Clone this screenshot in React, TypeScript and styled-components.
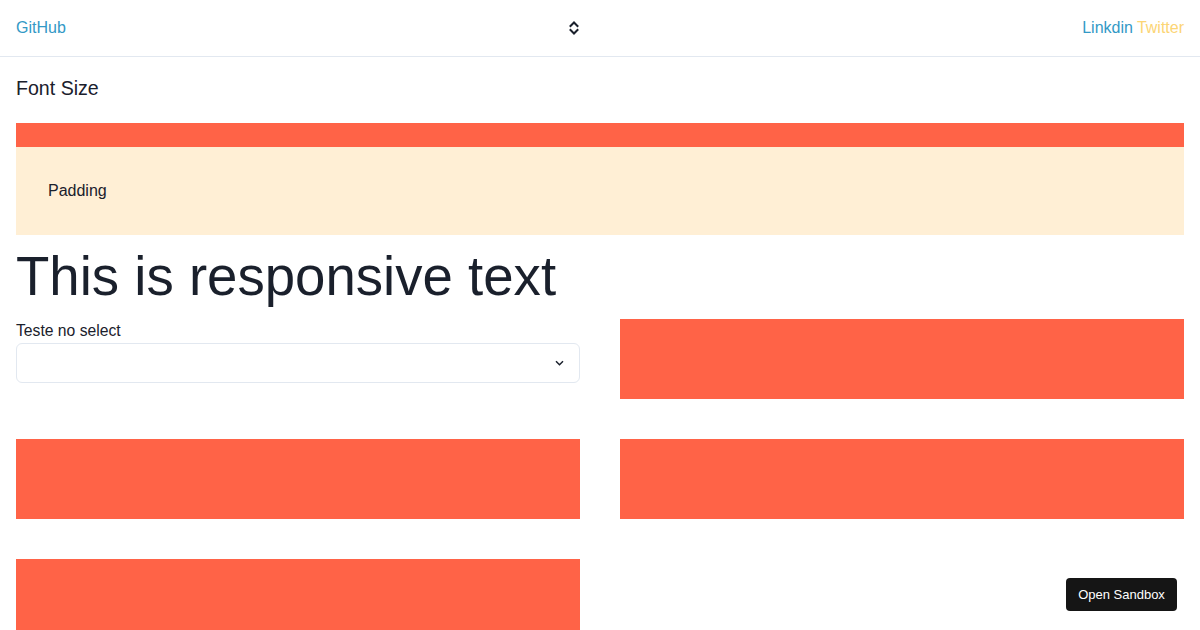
import React from "react";
import styled, { createGlobalStyle } from "styled-components";

const Global = createGlobalStyle`
  * { box-sizing: border-box; }
  html, body { margin: 0; padding: 0; background: #fff; }
  body {
    font-family: "Liberation Sans", Arial, sans-serif;
    color: #1a202c;
    font-size: 16px;
    line-height: 1.5;
  }
`;

const Header = styled.header`
  height: 57px;
  border-bottom: 1px solid #e2e8f0;
  display: flex;
  justify-content: space-between;
  align-items: center;
  padding: 0 16px;
`;

const NavLink = styled.a<{ $tone: string }>`
  color: ${(p) => p.$tone};
  text-decoration: none;
  font-size: 16px;
`;

const Right = styled.nav`
  display: flex;
  justify-content: flex-end;
  gap: 4px;
`;

const Toggle = styled.button`
  border: 0;
  background: none;
  padding: 0;
  width: 16px;
  height: 16px;
  display: flex;
  align-items: center;
  justify-content: center;
  color: #1a202c;
`;

const Main = styled.main`
  padding: 16px 16px 0;
`;

const Title = styled.h2`
  margin: 0 0 20px;
  font-size: 19.6px;
  font-weight: 400;
  line-height: 30px;
`;

const Bar = styled.div`
  height: 24px;
  background: #ff6347;
`;

const PaddingBox = styled.div`
  background: #ffefd5;
  padding: 32px;
  line-height: 24px;
`;

const Big = styled.p`
  margin: 0;
  font-size: 54.6px;
  line-height: 84px;
`;

const Grid = styled.div`
  display: grid;
  grid-template-columns: 1fr 1fr;
  column-gap: 40px;
  row-gap: 40px;
  grid-auto-rows: 80px;
`;

const Tile = styled.div`
  background: #ff6347;
`;

const Field = styled.div`
  display: flex;
  flex-direction: column;
`;

const Label = styled.label`
  font-size: 15.7px;
  line-height: 24px;
`;

const SelectBox = styled.div`
  height: 40px;
  border: 1px solid #e2e8f0;
  border-radius: 6px;
  display: flex;
  align-items: center;
  justify-content: flex-end;
  padding-right: 15px;
  color: #1a202c;
`;

const SandboxButton = styled.a`
  position: fixed;
  right: 23px;
  bottom: 19px;
  width: 111px;
  height: 33px;
  background: #151515;
  color: #fff;
  border-radius: 4px;
  font-size: 13px;
  display: flex;
  align-items: center;
  justify-content: center;
  text-decoration: none;
`;

export default function App() {
  return (
    <>
      <Global />
      <Header>
        <NavLink $tone="#3399c6" href="#">GitHub</NavLink>
        <Toggle aria-label="toggle">
          <svg width="12" height="16" viewBox="0 0 12 16" fill="none" stroke="currentColor" strokeWidth="2" strokeLinecap="square" strokeLinejoin="miter">
            <polyline points="2.5,6 6,2.5 9.5,6" />
            <polyline points="2.5,10 6,13.5 9.5,10" />
          </svg>
        </Toggle>
        <Right>
          <NavLink $tone="#3399c6" href="#">Linkdin</NavLink>
          <NavLink $tone="#fcd575" href="#">Twitter</NavLink>
        </Right>
      </Header>
      <Main>
        <Title>Font Size</Title>
        <Bar />
        <PaddingBox>Padding</PaddingBox>
        <Big>This is responsive text</Big>
        <Grid>
          <Field>
            <Label>Teste no select</Label>
            <SelectBox>
              <svg width="9" height="6" viewBox="0 0 9 6" fill="none" stroke="currentColor" strokeWidth="1.5">
                <polyline points="1,1.2 4.5,4.7 8,1.2" />
              </svg>
            </SelectBox>
          </Field>
          <Tile />
          <Tile />
          <Tile />
          <Tile />
        </Grid>
      </Main>
      <SandboxButton href="#">Open Sandbox</SandboxButton>
    </>
  );
}
